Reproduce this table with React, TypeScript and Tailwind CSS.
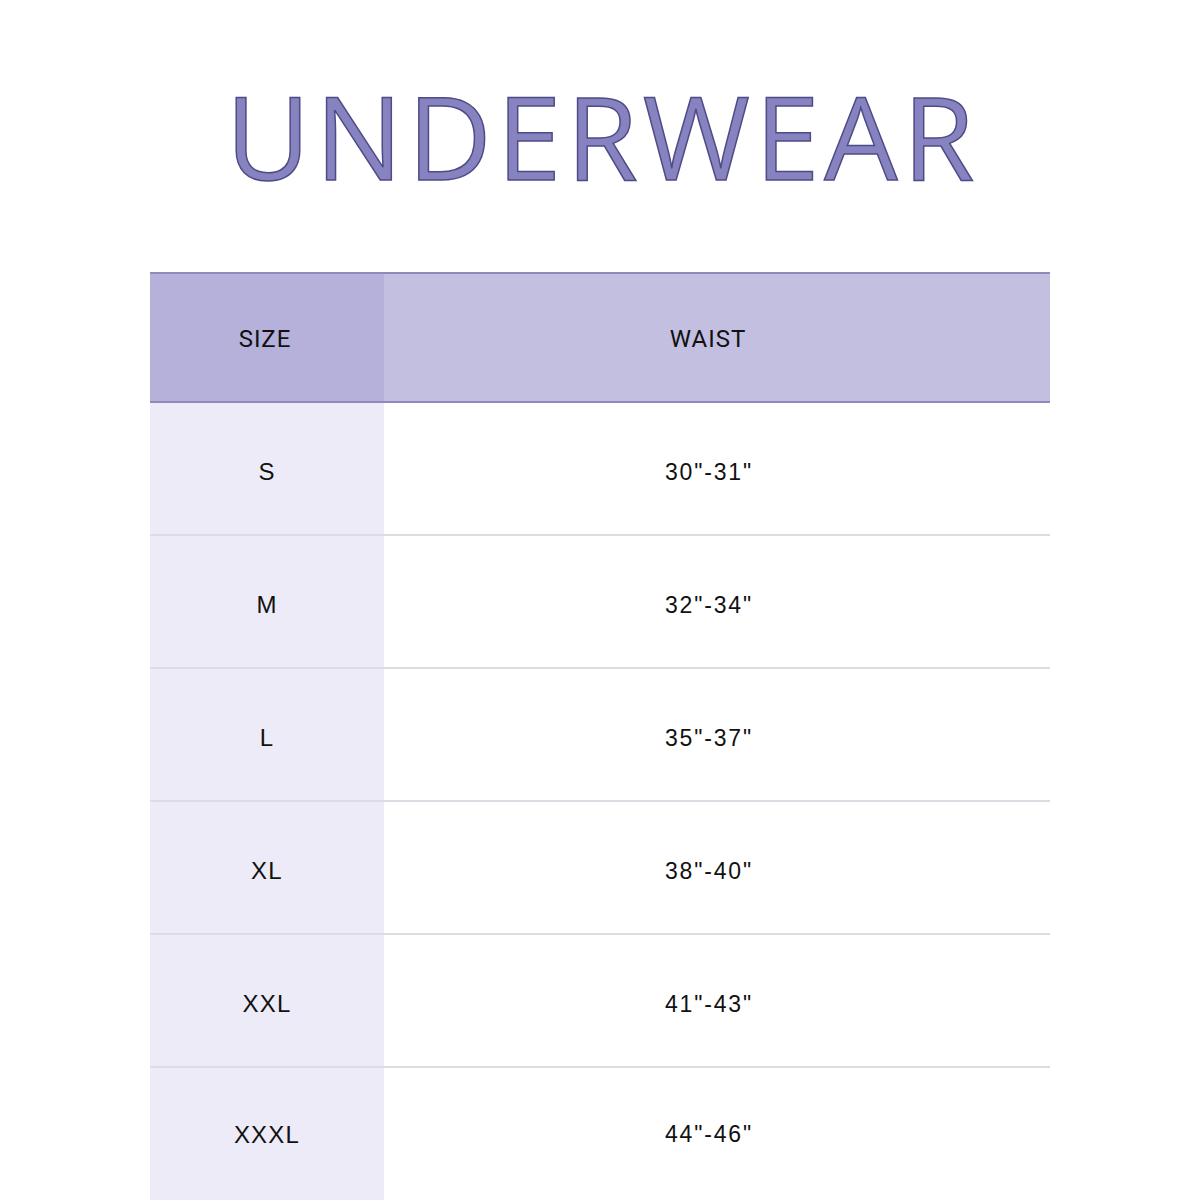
const rows = [
  { size: 'S', waist: '30"-31"' },
  { size: 'M', waist: '32"-34"' },
  { size: 'L', waist: '35"-37"' },
  { size: 'XL', waist: '38"-40"' },
  { size: 'XXL', waist: '41"-43"' },
  { size: 'XXXL', waist: '44"-46"' },
];

export default function App() {
  return (
    <div className="w-[1200px] h-[1200px] bg-white overflow-hidden font-['Liberation_Sans',Arial,sans-serif]">
      {/* title */}
      <div className="h-[272px] pt-[67px] flex justify-center">
        <h1
          className="text-[116px] leading-[136px] tracking-[5px] pl-[5px] text-[#8783c0] font-['Open_Sans',sans-serif] font-medium"
          style={{ WebkitTextStroke: '1.5px #4f4b86' }}
        >
          UNDERWEAR
        </h1>
      </div>

      {/* table */}
      <div className="mx-[150px] w-[900px]">
        <div className="flex h-[131px] border-t-2 border-b-2 border-[#8e8abb]">
          <div className="w-[234px] bg-[#b5b1da] flex items-center justify-center pt-[3px] pr-[4px] text-[24px] text-[#111] tracking-[0.04em] font-['Roboto',sans-serif]">
            SIZE
          </div>
          <div className="flex-1 bg-[#c3bfe1] flex items-center justify-center pt-[3px] pr-[18px] text-[24px] text-[#111] tracking-[0.04em] font-['Roboto',sans-serif]">
            WAIST
          </div>
        </div>
        {rows.map((r, i) => {
          const last = i === rows.length - 1;
          return (
            <div
              key={r.size}
              className={`flex h-[133px] ${last ? 'pt-0' : 'border-b-2 border-[#dcdce4]'}`}
            >
              <div className={`w-[234px] bg-[#edebf7] flex items-center justify-center text-[24px] text-[#111] tracking-[0.05em] ${last ? 'pt-[0px]' : 'pt-[7px]'}`}>
                {r.size}
              </div>
              <div className={`flex-1 bg-white flex items-center justify-center pr-[16px] text-[23px] text-[#111] tracking-[0.08em] ${last ? 'pt-[0px]' : 'pt-[7px]'}`}>
                {r.waist}
              </div>
            </div>
          );
        })}
      </div>
    </div>
  );
}
